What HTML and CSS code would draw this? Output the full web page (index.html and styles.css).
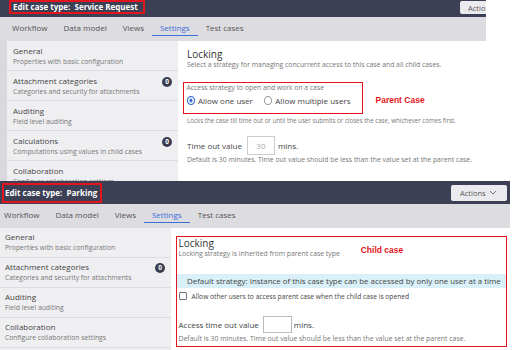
FILE: index.html
```html
<!DOCTYPE html>
<html lang="en">
<head>
  <meta charset="UTF-8">
  <title>Edit case type | Locking</title>
  <link rel="stylesheet" href="styles.css">
</head>
<body>

<div class="shot shot-parent">
  <header class="topbar">
    <span class="case-title">Edit case type:&nbsp; Service Request</span>
    <span class="actions">Actions</span>
  </header>
  <nav class="tabs">
    <span class="tab">Workflow</span>
    <span class="tab">Data model</span>
    <span class="tab">Views</span>
    <span class="tab active">Settings</span>
    <span class="tab">Test cases</span>
  </nav>
  <div class="content">
    <aside class="sidebar">
      <div class="item">
        <div><div class="item-title">General</div><div class="item-desc">Properties with basic configuration</div></div>
      </div>
      <div class="item">
        <div><div class="item-title">Attachment categories</div><div class="item-desc">Categories and security for attachments</div></div>
        <span class="badge">0</span>
      </div>
      <div class="item">
        <div><div class="item-title">Auditing</div><div class="item-desc">Field level auditing</div></div>
      </div>
      <div class="item">
        <div><div class="item-title">Calculations</div><div class="item-desc">Computations using values in child cases</div></div>
        <span class="badge">0</span>
      </div>
      <div class="item">
        <div><div class="item-title">Collaboration</div><div class="item-desc">Configure collaboration settings</div></div>
      </div>
    </aside>
    <main class="panel">
      <h3 class="panel-title">Locking</h3>
      <p class="hint wide">Select a strategy for managing concurrent access to this case and all child cases.</p>
      <div class="strategy-row">
        <div class="strategy-box">
          <div class="tiny">Access strategy to open and work on a case</div>
          <div class="radios">
            <span class="radio checked"></span><span class="radio-label">Allow one user</span>
            <span class="radio"></span><span class="radio-label">Allow multiple users</span>
          </div>
        </div>
        <span class="note">Parent Case</span>
      </div>
      <p class="hint locks">Locks the case till time out or until the user submits or closes the case, whichever comes first.</p>
      <div class="timeout">
        <span>Time out value</span>
        <span class="field disabled">30</span>
        <span class="unit">mins.</span>
      </div>
      <p class="hint wide">Default is 30 minutes. Time out value should be less than the value set at the parent case.</p>
    </main>
  </div>
</div>

<div class="shot shot-child">
  <header class="topbar">
    <span class="case-title">Edit case type:&nbsp; Parking</span>
    <span class="actions">Actions
      <svg width="8" height="5" viewBox="0 0 8 5"><path d="M1 1l3 3 3-3" fill="none" stroke="#666" stroke-width="0.9"/></svg>
    </span>
  </header>
  <nav class="tabs">
    <span class="tab">Workflow</span>
    <span class="tab">Data model</span>
    <span class="tab">Views</span>
    <span class="tab active">Settings</span>
    <span class="tab">Test cases</span>
  </nav>
  <div class="content">
    <aside class="sidebar">
      <div class="item">
        <div><div class="item-title">General</div><div class="item-desc">Properties with basic configuration</div></div>
      </div>
      <div class="item">
        <div><div class="item-title">Attachment categories</div><div class="item-desc">Categories and security for attachments</div></div>
        <span class="badge">0</span>
      </div>
      <div class="item">
        <div><div class="item-title">Auditing</div><div class="item-desc">Field level auditing</div></div>
      </div>
      <div class="item">
        <div><div class="item-title">Collaboration</div><div class="item-desc">Configure collaboration settings</div></div>
      </div>
    </aside>
    <main class="panel">
      <div class="child-box">
        <div class="child-head">
          <div>
            <h3 class="panel-title">Locking</h3>
            <p class="hint wide">Locking strategy is inherited from parent case type</p>
          </div>
          <span class="note">Child case</span>
        </div>
        <div class="info">Default strategy: Instance of this case type can be accessed by only one user at a time</div>
        <label class="check-row"><span class="checkbox"></span>Allow other users to access parent case when the child case is opened</label>
        <div class="timeout">
          <span>Access time out value</span>
          <span class="field"></span>
          <span class="unit">mins.</span>
        </div>
        <p class="hint small">Default is 30 minutes. Time out value should be less than the value set at the parent case.</p>
      </div>
    </main>
  </div>
</div>

</body>
</html>
```

FILE: styles.css
```css
body {
  margin: 0;
  background: #fff;
  font-family: 'Open Sans', sans-serif;
  color: #333;
  overflow: hidden;
}
.shot {
  overflow: hidden;
}
.shot-parent {
  width: 486px;
  height: 181px;
}
.shot-child {
  width: 510px;
  height: 169px;
}
.topbar {
  display: flex;
  justify-content: space-between;
  background: #3d4055;
  overflow: hidden;
}
.shot-parent .topbar {
  height: 17px;
  align-items: flex-start;
  padding-left: 9px;
}
.shot-child .topbar {
  height: 23px;
  align-items: center;
  padding-left: 2px;
  padding-right: 3px;
}
.case-title {
  border: 2px solid #e3141b;
  color: #fff;
  font-weight: bold;
  font-size: 8px;
  line-height: 10px;
  padding: 0 5px 0 2px;
  white-space: nowrap;
}
.shot-parent .case-title {
  height: 10px;
}
.shot-child .case-title {
  padding: 3px 3px 3px 1px;
}
.actions {
  display: flex;
  align-items: center;
  gap: 3px;
  background: #ebebef;
  color: #555;
  font-size: 7.5px;
  border-radius: 2px;
  white-space: nowrap;
  flex-shrink: 0;
}
.shot-parent .actions {
  width: 40px;
  height: 13px;
  margin-top: 1px;
  margin-right: -22px;
  padding-left: 8px;
}
.shot-child .actions {
  width: 47px;
  height: 16px;
  padding-left: 9px;
}
.tabs {
  display: flex;
  background: #dcdce1;
  height: 24px;
  box-sizing: border-box;
  padding-bottom: 5px;
  padding-left: 4px;
}
.shot-child .tabs {
  padding-left: 0;
}
.shot-child .tab:first-child {
  padding-left: 4px;
}
.tab {
  display: flex;
  align-items: center;
  padding: 3px 8px 0;
  font-size: 8px;
  color: #555;
  border-bottom: 1.5px solid transparent;
}
.tab.active {
  color: #3b6fd6;
  border-bottom-color: #3b6fd6;
}
.content {
  display: flex;
  overflow: hidden;
}
.shot-parent .content {
  height: 140px;
  padding-left: 7px;
  background: #d8d8dd;
}
.shot-child .content {
  height: 122px;
}
.sidebar {
  width: 171px;
  background: #efeff2;
  flex-shrink: 0;
}
.item {
  display: flex;
  justify-content: space-between;
  border-bottom: 1.5px solid #dcdce0;
  padding: 5px 6px 4px 6px;
}
.shot-child .item {
  padding: 4px 6px 5px 5px;
}
.item-title {
  font-size: 8px;
  line-height: 10px;
  color: #444;
}
.item-desc {
  font-size: 6.8px;
  line-height: 9px;
  margin-top: 1px;
  color: #777;
  white-space: nowrap;
}
.badge {
  width: 10px;
  height: 10px;
  border-radius: 50%;
  background: #3a3d50;
  color: #fff;
  font-size: 6.5px;
  font-weight: bold;
  line-height: 10px;
  text-align: center;
  margin-top: 1px;
}
.panel {
  flex: 1;
  background: #fff;
}
.shot-parent .panel {
  padding: 7px 0 0 9px;
}
.shot-child .panel {
  padding: 8px 3px 0 5px;
}
.panel-title {
  margin: 0;
  font-size: 10px;
  font-weight: normal;
  line-height: 13px;
  color: #333;
}
.hint {
  margin: 0;
  font-size: 6.2px;
  line-height: 8px;
  color: #777;
  white-space: nowrap;
}
.hint.wide {
  font-size: 6.85px;
}
.hint.locks {
  margin-top: 3px;
}
.strategy-row {
  display: flex;
  align-items: center;
  margin-top: 13px;
  margin-left: -4px;
}
.strategy-box {
  width: 175px;
  height: 29px;
  border: 1.5px solid #e3141b;
  padding: 1px 0 0 2.5px;
}
.tiny {
  font-size: 6.8px;
  line-height: 8px;
  color: #777;
  white-space: nowrap;
}
.radios {
  display: flex;
  align-items: center;
  margin-top: 2px;
  height: 12px;
}
.radio {
  width: 7px;
  height: 7px;
  border: 1px solid #999;
  border-radius: 50%;
  background: #fff;
  margin-right: 3px;
}
.radio.checked {
  border-color: #3b6fd6;
  background: #3b6fd6;
  box-shadow: inset 0 0 0 1.5px #fff;
}
.radio-label {
  font-size: 8px;
  color: #444;
  margin-right: 11px;
  white-space: nowrap;
}
.note {
  font-family: 'Liberation Sans', Arial, sans-serif;
  font-weight: bold;
  font-size: 8.5px;
  color: #e3141b;
  margin-left: 13px;
  padding-top: 3px;
}
.timeout {
  display: flex;
  align-items: center;
  font-size: 8px;
  color: #444;
  margin-top: 11px;
  white-space: nowrap;
}
.field {
  width: 26px;
  height: 17px;
  border: 1px solid #ccc;
  margin: 0 3px 0 5px;
  font-size: 8px;
  line-height: 17px;
  text-align: center;
  color: #aaa;
}
.timeout + .hint {
  margin-top: 1px;
}
.child-box {
  height: 111px;
  border: 1.5px solid #e3141b;
  box-sizing: border-box;
  padding: 0 0 0 1.5px;
}
.child-head {
  display: flex;
  align-items: flex-end;
}
.child-head .note {
  margin-left: 21px;
  padding-top: 0;
  margin-bottom: 3px;
}
.info {
  margin: 16px 0 0 -1.5px;
  height: 14px;
  background: #d9f0f8;
  padding-left: 10px;
  font-size: 7.9px;
  line-height: 14px;
  color: #444;
  white-space: nowrap;
}
.check-row {
  display: flex;
  align-items: center;
  margin-top: 3px;
  height: 10px;
  font-size: 6.7px;
  color: #444;
  white-space: nowrap;
}
.checkbox {
  width: 6px;
  height: 6px;
  border: 1px solid #777;
  border-radius: 1px;
  margin-right: 5px;
}
.child-box .timeout {
  margin-top: 15px;
  font-size: 8px;
}
.child-box .field {
  width: 27px;
  height: 15px;
  margin: 0 2px 0 4px;
  border-color: #bbb;
}
.hint.small {
  font-size: 6.9px;
  line-height: 9px;
  margin-top: 1px;
}
```
